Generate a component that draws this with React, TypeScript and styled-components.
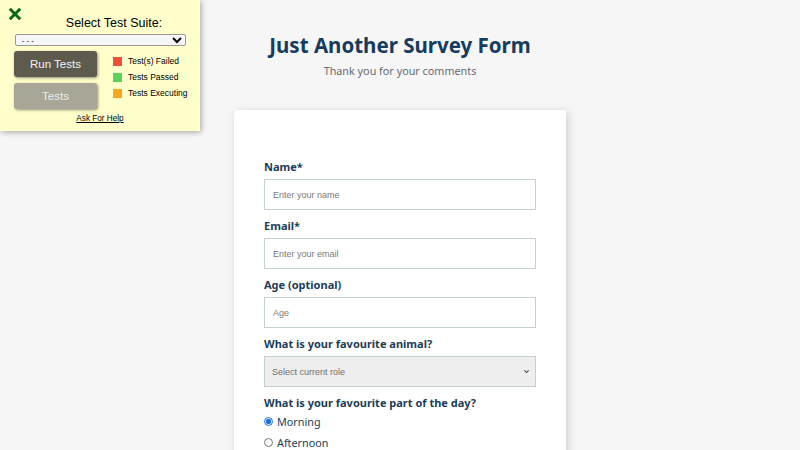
import React from "react";
import styled, { createGlobalStyle } from "styled-components";

const GlobalStyle = createGlobalStyle`
  html, body {
    margin: 0;
    padding: 0;
    background: #f6f6f7;
  }
  body {
    font-family: "Noto Sans", "Liberation Sans", sans-serif;
    color: #1c3d5a;
    overflow: hidden;
  }
`;

const Page = styled.div`
  width: 800px;
  height: 450px;
  overflow: hidden;
  position: relative;
  display: flex;
  flex-direction: column;
  align-items: center;
`;

const Header = styled.header`
  display: flex;
  flex-direction: column;
  align-items: center;
  padding-top: 31px;
  margin-bottom: 31px;
`;

const Title = styled.h1`
  margin: 0;
  font-size: 20.5px;
  line-height: 28px;
  font-weight: 700;
  color: #173b5f;
`;

const Subtitle = styled.p`
  margin: 4px 0 0;
  font-size: 10.8px;
  line-height: 16px;
  color: #676b75;
`;

const Card = styled.form`
  width: 332px;
  box-sizing: border-box;
  background: #ffffff;
  border-radius: 3px;
  box-shadow: 2px 2px 10px rgba(0, 0, 0, 0.16);
  padding: 47px 30px 40px;
  display: flex;
  flex-direction: column;
`;

const Group = styled.div`
  display: flex;
  flex-direction: column;
  margin-bottom: 6px;
`;

const Label = styled.label<{ $tight?: boolean }>`
  font-size: 11px;
  line-height: 20px;
  font-weight: 700;
  color: #1c3d5a;
  margin-bottom: ${(p) => (p.$tight ? "-2px" : "2px")};
`;

const fieldBase = `
  box-sizing: border-box;
  width: 100%;
  height: 31px;
  border: 1px solid #c4cfd3;
  border-radius: 0;
  padding: 0 8px;
  font-family: "Liberation Sans", Arial, sans-serif;
  font-size: 9px;
  color: #333;
  outline: none;
`;

const Input = styled.input`
  ${fieldBase}
  background: #fff;
  &::placeholder {
    color: #7a7a7a;
  }
`;

const SelectWrap = styled.div`
  position: relative;
`;

const Select = styled.select`
  ${fieldBase}
  appearance: none;
  background: #eeeeee;
  color: #6f6f6f;
  padding-left: 7px;
`;

const Chevron = styled.svg`
  position: absolute;
  right: 6px;
  top: 12px;
  width: 7px;
  height: 7px;
  pointer-events: none;
`;

const RadioRow = styled.label`
  display: flex;
  align-items: center;
  height: 21px;
  font-size: 10.8px;
  color: #1c3d5a;
`;

const Radio = styled.input`
  width: 9px;
  height: 9px;
  margin: 0 4px 0 0;
  accent-color: #1a73e8;
`;

/* ---- test panel ---- */

const Panel = styled.div`
  position: absolute;
  top: 0;
  left: 0;
  width: 200px;
  height: 131px;
  box-sizing: border-box;
  background: #ffffcc;
  box-shadow: 1px 1px 6px rgba(0, 0, 0, 0.35);
  font-family: "Liberation Sans", Arial, sans-serif;
  color: #000;
  padding: 16px 14px 0;
  display: flex;
  flex-direction: column;
  align-items: center;
`;

const Close = styled.svg`
  position: absolute;
  left: 8px;
  top: 7px;
  width: 14px;
  height: 14px;
`;

const PanelTitle = styled.div`
  font-size: 12.5px;
  line-height: 14px;
  margin-left: 28px;
`;

const SuiteSelect = styled.select`
  width: 171px;
  height: 12px;
  margin-top: 4px;
  font-size: 8px;
  padding: 0 2px;
  box-sizing: border-box;
  border: 1px solid #999;
  border-radius: 2px;
  background: #f6f6f6;
  font-family: "Liberation Sans", Arial, sans-serif;
`;

const PanelBody = styled.div`
  display: flex;
  width: 100%;
  margin-top: 5px;
  gap: 16px;
`;

const Buttons = styled.div`
  display: flex;
  flex-direction: column;
  gap: 6px;
`;

const PanelButton = styled.button<{ $light?: boolean }>`
  width: 83px;
  height: 26px;
  border: none;
  border-radius: 3px;
  background: ${(p) => (p.$light ? "#a8a696" : "#5d5a4e")};
  color: ${(p) => (p.$light ? "#ececec" : "#f2f2f2")};
  font-family: "Liberation Sans", Arial, sans-serif;
  font-size: 11.5px;
  box-shadow: 1px 1px 3px rgba(0, 0, 0, 0.45);
  cursor: pointer;
`;

const Legend = styled.div`
  display: flex;
  flex-direction: column;
  gap: 7px;
  padding-top: 6px;
`;

const LegendItem = styled.div`
  display: flex;
  align-items: center;
  gap: 6px;
  font-size: 8.5px;
  line-height: 9px;
  white-space: nowrap;
`;

const Swatch = styled.span<{ $color: string }>`
  flex: none;
  width: 9px;
  height: 9px;
  background: ${(p) => p.$color};
  display: inline-block;
`;

const HelpLink = styled.a`
  margin-top: 5px;
  font-size: 8.2px;
  color: #000;
  text-decoration: underline;
`;

const legend = [
  { color: "#f34d3c", label: "Test(s) Failed" },
  { color: "#5bd35b", label: "Tests Passed" },
  { color: "#f9a51f", label: "Tests Executing" },
];

const App = (): JSX.Element => {
  return (
    <React.Fragment>
      <GlobalStyle />
      <Page>
        <Header>
          <Title>Just Another Survey Form</Title>
          <Subtitle>Thank you for your comments</Subtitle>
        </Header>

        <Card onSubmit={(e) => e.preventDefault()}>
          <Group>
            <Label htmlFor="name">Name*</Label>
            <Input id="name" placeholder="Enter your name" />
          </Group>
          <Group>
            <Label htmlFor="email">Email*</Label>
            <Input id="email" placeholder="Enter your email" />
          </Group>
          <Group>
            <Label htmlFor="age">Age (optional)</Label>
            <Input id="age" placeholder="Age" />
          </Group>
          <Group>
            <Label htmlFor="animal">What is your favourite animal?</Label>
            <SelectWrap>
              <Select id="animal" defaultValue="">
                <option value="">Select current role</option>
                <option value="dog">Dog</option>
                <option value="cat">Cat</option>
              </Select>
              <Chevron viewBox="0 0 10 10">
                <path d="M2 3.5 L5 6.5 L8 3.5" fill="none" stroke="#444" strokeWidth="1.6" />
              </Chevron>
            </SelectWrap>
          </Group>
          <Group>
            <Label as="div" $tight>
              What is your favourite part of the day?
            </Label>
            <RadioRow>
              <Radio type="radio" name="day" defaultChecked />
              Morning
            </RadioRow>
            <RadioRow>
              <Radio type="radio" name="day" />
              Afternoon
            </RadioRow>
          </Group>
        </Card>

        <Panel>
          <Close viewBox="0 0 14 14">
            <path d="M1.8 1.8 L12.2 12.2 M12.2 1.8 L1.8 12.2" stroke="#0b6a10" strokeWidth="3" />
          </Close>
          <PanelTitle>Select Test Suite:</PanelTitle>
          <SuiteSelect defaultValue="none">
            <option value="none">- - -</option>
          </SuiteSelect>
          <PanelBody>
            <Buttons>
              <PanelButton type="button">Run Tests</PanelButton>
              <PanelButton type="button" $light>
                Tests
              </PanelButton>
            </Buttons>
            <Legend>
              {legend.map((item) => (
                <LegendItem key={item.label}>
                  <Swatch $color={item.color} />
                  {item.label}
                </LegendItem>
              ))}
            </Legend>
          </PanelBody>
          <HelpLink href="#">Ask For Help</HelpLink>
        </Panel>
      </Page>
    </React.Fragment>
  );
};

export default App;
